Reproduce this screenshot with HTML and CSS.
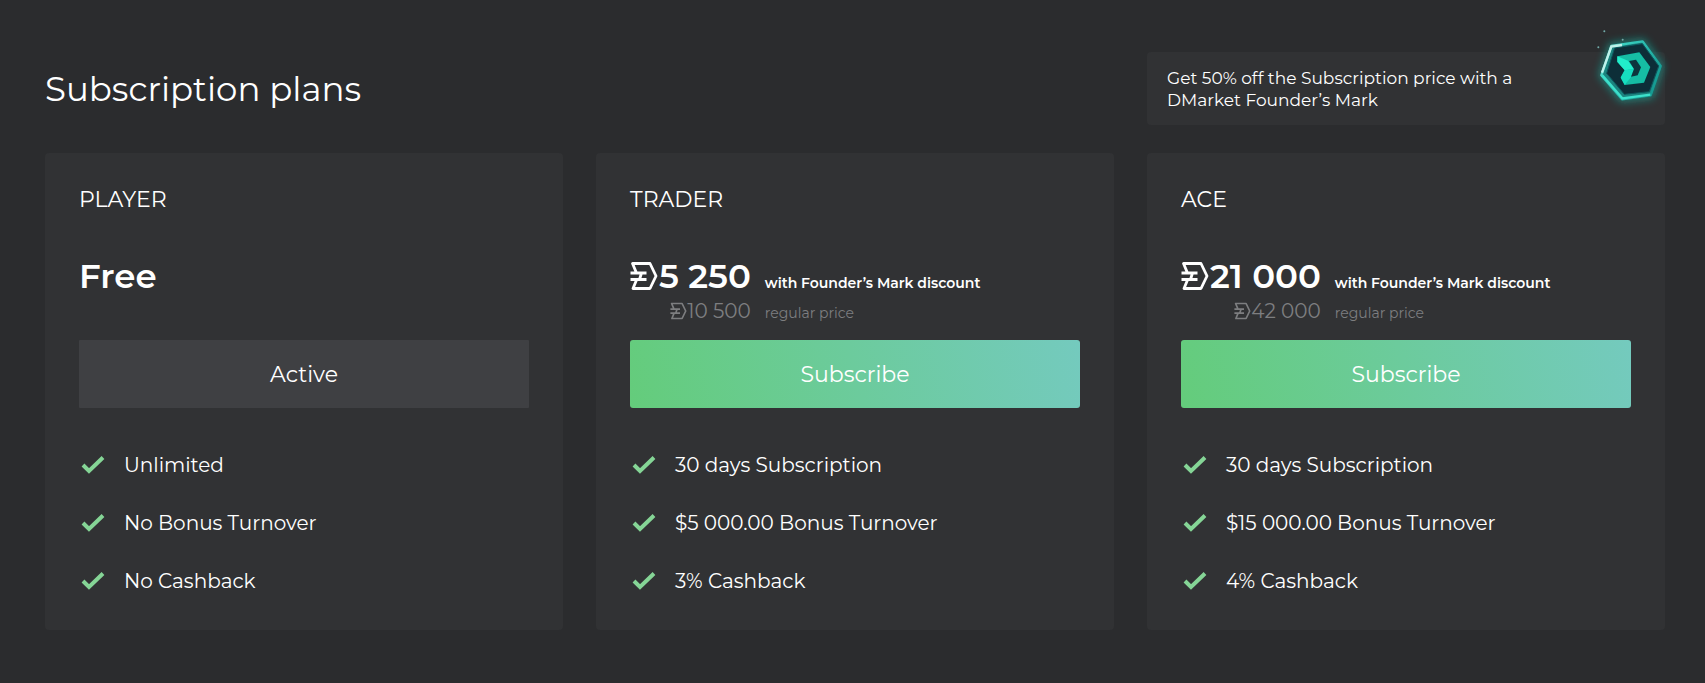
FILE: index.html
```
<!DOCTYPE html>
<html lang="en">
<head>
<meta charset="utf-8">
<meta name="viewport" content="width=device-width, initial-scale=1">
<title>Subscription plans</title>
<link rel="stylesheet" href="styles.css">
</head>
<body>
<svg class="defs" aria-hidden="true">
  <symbol id="check" viewBox="0 0 24 20"><path d="M2 10 8 16 22 2.500" fill="none" stroke="currentColor" stroke-width="4"/></symbol>
  <symbol id="coin" viewBox="0 0 28 30"><path d="M6.500 12 2.500 2.500H20L26 15 20 27.500H3L6.500 19M0.500 12H16.500M0.500 18.500H16.500M11.500 12 9.500 18.500" fill="none" stroke="currentColor" stroke-width="2.800" stroke-linejoin="round"/></symbol>
</svg>
<main class="page">
  <header class="top">
    <h1 class="title">Subscription plans</h1>
    <aside class="promo">
      <p class="promo-text">Get 50% off the Subscription price with a DMarket Founder’s Mark</p>
      <svg class="mark" viewBox="0 0 300 330" aria-hidden="true">
        <defs>
          <filter id="glow" x="-40%" y="-40%" width="180%" height="180%"><feGaussianBlur stdDeviation="12"/></filter>
          <filter id="soft" x="-20%" y="-20%" width="140%" height="140%"><feGaussianBlur stdDeviation="2"/></filter>
          <linearGradient id="rim" x1="0" y1="0" x2="1" y2="0.600"><stop offset="0" stop-color="#c9f5ee"/><stop offset=".3" stop-color="#39cfc0"/><stop offset="1" stop-color="#149b92"/></linearGradient>
        </defs>
        <path d="M92 74 190 62 245 138 215 230 124 240 62 166Z" fill="#128a80" stroke="#19b8a8" stroke-width="8" opacity=".75" filter="url(#glow)"/>
        <g filter="url(#soft)" stroke-linejoin="round">
          <path d="M94 78 188 64 242 138 212 226 126 238 64 166Z" fill="#1d837e" stroke="url(#rim)" stroke-width="7"/>
          <path d="M104 84 187 71 236 138 208 215 133 223 80 160Z" fill="#082e39" stroke="#0d555b" stroke-width="3"/>
          <path d="M67 166 127 235 211 224" fill="none" stroke="#3ce0cb" stroke-width="7"/>
          <path d="M66 158 94 80 126 75" fill="none" stroke="#bff1ea" stroke-width="7"/>
          <path d="M112 109 178 97 211 141 192 188 134 195 122 172 134 150 112 125Z" fill="#12bda4"/>
          <path d="M112 109 144 122 162 147 134 151 112 126Z" fill="#21edca"/>
          <path d="M134 151 162 147 154 170 134 195 122 173Z" fill="#16dec0"/>
          <path d="M147 123 168 119 183 142 173 166 153 170 162 147Z" fill="#08343d"/>
        </g>
        <g fill="#71aaa8"><circle cx="73" cy="34" r="3"/><circle cx="55" cy="82" r="3"/><circle cx="128" cy="59" r="3"/></g>
      </svg>
    </aside>
  </header>
  <section class="plans">
    <article class="card">
      <h2 class="name">PLAYER</h2>
      <div class="price"><strong class="amount">Free</strong></div>
      <button class="action active" type="button">Active</button>
      <ul class="features">
        <li><svg class="check"><use href="#check"/></svg>Unlimited</li>
        <li><svg class="check"><use href="#check"/></svg>No Bonus Turnover</li>
        <li><svg class="check"><use href="#check"/></svg>No Cashback</li>
      </ul>
    </article>
    <article class="card">
      <h2 class="name">TRADER</h2>
      <div class="price">
        <strong class="amount"><svg class="coin"><use href="#coin"/></svg>5 250</strong><span class="note">with Founder’s Mark discount</span>
        <span class="regular"><svg class="coin small"><use href="#coin"/></svg>10 500</span><span class="regular-note">regular price</span>
      </div>
      <button class="action" type="button">Subscribe</button>
      <ul class="features">
        <li><svg class="check"><use href="#check"/></svg>30 days Subscription</li>
        <li><svg class="check"><use href="#check"/></svg>$5 000.00 Bonus Turnover</li>
        <li><svg class="check"><use href="#check"/></svg>3% Cashback</li>
      </ul>
    </article>
    <article class="card">
      <h2 class="name">ACE</h2>
      <div class="price">
        <strong class="amount"><svg class="coin"><use href="#coin"/></svg>21 000</strong><span class="note">with Founder’s Mark discount</span>
        <span class="regular"><svg class="coin small"><use href="#coin"/></svg>42 000</span><span class="regular-note">regular price</span>
      </div>
      <button class="action" type="button">Subscribe</button>
      <ul class="features">
        <li><svg class="check"><use href="#check"/></svg>30 days Subscription</li>
        <li><svg class="check"><use href="#check"/></svg>$15 000.00 Bonus Turnover</li>
        <li><svg class="check"><use href="#check"/></svg>4% Cashback</li>
      </ul>
    </article>
  </section>
</main>
</body>
</html>
```
FILE: styles.css
```
* { box-sizing: border-box; }
body {
  margin: 0;
  min-height: 100vh;
  background: #2b2c2e;
  color: #fff;
  font-family: Montserrat, Inter, sans-serif;
}
h1, h2, p, ul { margin: 0; padding: 0; font-weight: 400; }
.defs { position: absolute; width: 0; height: 0; }
.page { padding: 52px 40px 54px 45px; }
.top, .plans { display: grid; grid-template-columns: repeat(3, 1fr); column-gap: 33px; }
.top { margin-bottom: 28px; }
.title { grid-column: span 2; align-self: center; font-size: 34px; line-height: 44px; }
.promo {
  position: relative;
  padding: 15px 120px 14px 20px;
  border-radius: 4px;
  background: #313234;
}
.promo-text { font-size: 17px; line-height: 22px; }
.mark { position: absolute; top: -32px; right: -15px; width: 100px; height: 110px; }
.card { padding: 33px 34px 20px; border-radius: 4px; background: #313234; }
.name { font-size: 22px; line-height: 28px; }
.price {
  display: grid;
  grid-template-columns: max-content 1fr;
  grid-template-rows: 43px 28px;
  column-gap: 14px;
  align-items: baseline;
  height: 84px;
  margin: 42px 0 0;
}
.amount { font-size: 34px; line-height: 40px; font-weight: 600; text-align: right; }
.note { font-size: 14px; font-weight: 600; }
.regular { font-size: 20px; line-height: 25px; color: #7d7e80; text-align: right; }
.regular-note { font-size: 14px; color: #7d7e80; }
.coin { width: 28px; height: 30px; vertical-align: -3px; margin-right: 1px; }
.coin.small { width: 17px; height: 18px; vertical-align: -2px; margin-right: 0; }
.action {
  display: block;
  width: 100%;
  height: 68px;
  border: 0;
  border-radius: 3px;
  background: linear-gradient(75deg, #64cc7b, #74cabe);
  color: #fff;
  font: inherit;
  font-size: 22px;
}
.action.active { border-radius: 1px; background: #3f4043; }
.features { margin-top: 28px; list-style: none; }
.features li { display: flex; align-items: center; gap: 19px; height: 58px; font-size: 20px; }
.check { flex: none; width: 24px; height: 20px; margin-left: 2px; color: #85d596; }
```
